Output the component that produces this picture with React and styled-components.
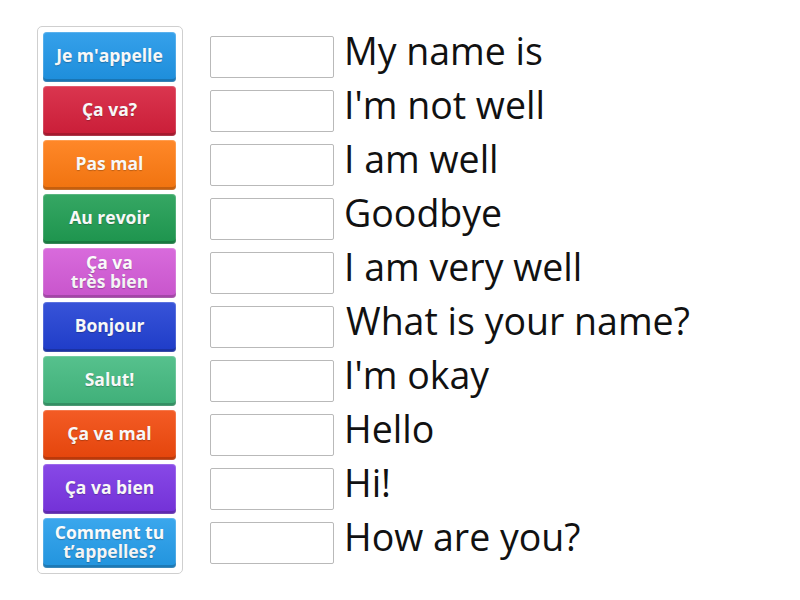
import React from 'react'
import styled, { createGlobalStyle } from 'styled-components'

const GlobalStyle = createGlobalStyle`
  body {
    margin: 0;
    background: #fff;
    font-family: "Open Sans", "Noto Sans", sans-serif;
  }
`

const Page = styled.div`
  display: flex;
  align-items: flex-start;
  padding: 26px 0 0 37px;
  gap: 27px;
`

const Panel = styled.div`
  display: flex;
  flex-direction: column;
  gap: 4px;
  padding: 5px 6px 5px 5px;
  border: 1px solid #cfcfcf;
  border-radius: 5px;
`

const Tile = styled.div`
  width: 133px;
  height: 50px;
  box-sizing: border-box;
  display: flex;
  align-items: center;
  justify-content: center;
  text-align: center;
  padding: 0 2px 3px;
  border-radius: 4px;
  color: #fff;
  font-weight: 700;
  font-size: 17.5px;
  line-height: 18.5px;
  text-shadow: 0 1px 1px rgba(0, 0, 0, 0.25);
  background: ${p => p.$color};
  box-shadow:
    inset 0 -3px 0 rgba(0, 0, 0, 0.18),
    inset 0 0 0 1px rgba(255, 255, 255, 0.18);
  position: relative;
  overflow: hidden;

  &::after {
    content: '';
    position: absolute;
    inset: 0;
    background: linear-gradient(to bottom, rgba(255, 255, 255, 0.1), rgba(0, 0, 0, 0.06));
    pointer-events: none;
  }
`

const Column = styled.div`
  display: flex;
  flex-direction: column;
  padding-top: 4px;
`

const Row = styled.div`
  display: flex;
  align-items: flex-start;
  height: 54px;
`

const Slot = styled.div`
  width: 124px;
  height: 42px;
  box-sizing: border-box;
  margin-top: 6px;
  border: 1px solid #b9b9b9;
  border-radius: 2px;
  background: #fff;
`

const Phrase = styled.div`
  margin-left: ${p => 10 + (p.$indent || 0)}px;
  font-size: 37.5px;
  line-height: 42px;
  color: #111;
  white-space: nowrap;
`

const tiles = [
  { text: "Je m'appelle", color: '#1f96e8' },
  { text: 'Ça va?', color: '#d61f3b' },
  { text: 'Pas mal', color: '#ff7a10' },
  { text: 'Au revoir', color: '#1f9d52' },
  { text: ['Ça va', 'très bien'], color: '#d45ad8' },
  { text: 'Bonjour', color: '#2140d4' },
  { text: 'Salut!', color: '#43ba80' },
  { text: 'Ça va mal', color: '#f2490c' },
  { text: 'Ça va bien', color: '#7a34e4' },
  { text: ['Comment tu', 't’appelles?'], color: '#249deb' },
]

const phrases = [
  { text: 'My name is' },
  { text: "I'm not well" },
  { text: 'I am well' },
  { text: 'Goodbye' },
  { text: 'I am very well' },
  { text: 'What is your name?', indent: 2 },
  { text: "I'm okay" },
  { text: 'Hello' },
  { text: 'Hi!' },
  { text: 'How are you?' },
]

export default function App() {
  return (
    <>
      <GlobalStyle />
      <Page>
        <Panel>
          {tiles.map((t, i) => (
            <Tile key={i} $color={t.color}>
              {Array.isArray(t.text) ? (
                <span>{t.text[0]}<br />{t.text[1]}</span>
              ) : t.text}
            </Tile>
          ))}
        </Panel>
        <Column>
          {phrases.map((p, i) => (
            <Row key={i}>
              <Slot />
              <Phrase $indent={p.indent}>{p.text}</Phrase>
            </Row>
          ))}
        </Column>
      </Page>
    </>
  )
}
